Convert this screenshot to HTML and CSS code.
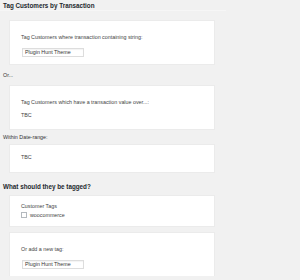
FILE: index.html
```html
<!DOCTYPE html>
<html lang="en">
<head>
    <meta charset="UTF-8">
    <title>Tag Customers by Transaction</title>
    <link rel="stylesheet" href="styles.css">
</head>
<body>
    <h2 class="title first">Tag Customers by Transaction</h2>

    <div class="card card-field">
        <p class="label">Tag Customers where transaction containing string:</p>
        <div class="input">Plugin Hunt Theme</div>
    </div>

    <p class="outer-label or">Or...</p>

    <div class="card card-tbc">
        <p class="label">Tag Customers which have a transaction value over...:</p>
        <p class="tbc">TBC</p>
    </div>

    <p class="outer-label range">Within Date-range:</p>

    <div class="card card-range">
        <p class="label">TBC</p>
    </div>

    <h2 class="title subtitle">What should they be tagged?</h2>

    <div class="card card-tags">
        <p class="label">Customer Tags</p>
        <label class="check-row"><span class="checkbox"></span>woocommerce</label>
    </div>

    <div class="card card-field card-new">
        <p class="label">Or add a new tag:</p>
        <div class="input">Plugin Hunt Theme</div>
    </div>
</body>
</html>
```

FILE: styles.css
```css
body {
    margin: 0;
    background-color: #f1f1f1;
    font-family: "Liberation Sans", Arial, sans-serif;
    font-size: 5.35px;
    color: #444;
}
p {
    margin: 0;
}
.title {
    margin: 0;
    padding: 1px 3px 0;
    font-size: 6.3px;
    line-height: 8px;
    font-weight: bold;
    color: #23282d;
}
.first {
    width: 220px;
    line-height: 9px;
    border-bottom: 1px solid #f6f6f6;
}
.subtitle {
    margin-top: 10px;
    padding-top: 0;
    line-height: 9px;
}
.card {
    width: 204px;
    margin-left: 10px;
    box-sizing: border-box;
    background-color: #fff;
    box-shadow: 0 0 0 1px #ebebeb;
    padding: 0 11px;
}
.label {
    line-height: 7px;
}
.card-field {
    margin-top: 10px;
    padding-top: 13px;
    padding-bottom: 7px;
}
.card-new {
    margin-top: 7px;
}
.input {
    width: 62px;
    height: 9px;
    margin: 7px 0 0 1px;
    box-sizing: border-box;
    border: 1px solid #ddd;
    box-shadow: inset 0 1px 1px rgba(0, 0, 0, 0.05);
    padding-left: 2px;
    line-height: 7px;
    color: #333;
}
.outer-label {
    line-height: 7px;
    padding-left: 3px;
    color: #333;
}
.or {
    margin-top: 8px;
}
.range {
    margin-top: 5px;
}
.card-tbc {
    margin-top: 7px;
    padding-top: 13px;
    padding-bottom: 10px;
}
.tbc {
    margin-top: 6px;
    line-height: 7px;
}
.card-range {
    margin-top: 4px;
    padding-top: 9px;
    padding-bottom: 11px;
}
.card-tags {
    margin-top: 5px;
    padding-top: 7px;
    padding-bottom: 8px;
}
.check-row {
    display: flex;
    align-items: center;
    height: 7px;
    margin-top: 1px;
}
.checkbox {
    width: 6px;
    height: 6px;
    box-sizing: border-box;
    border: 1px solid #b4b9be;
    background-color: #fff;
    margin-right: 3px;
}
```
